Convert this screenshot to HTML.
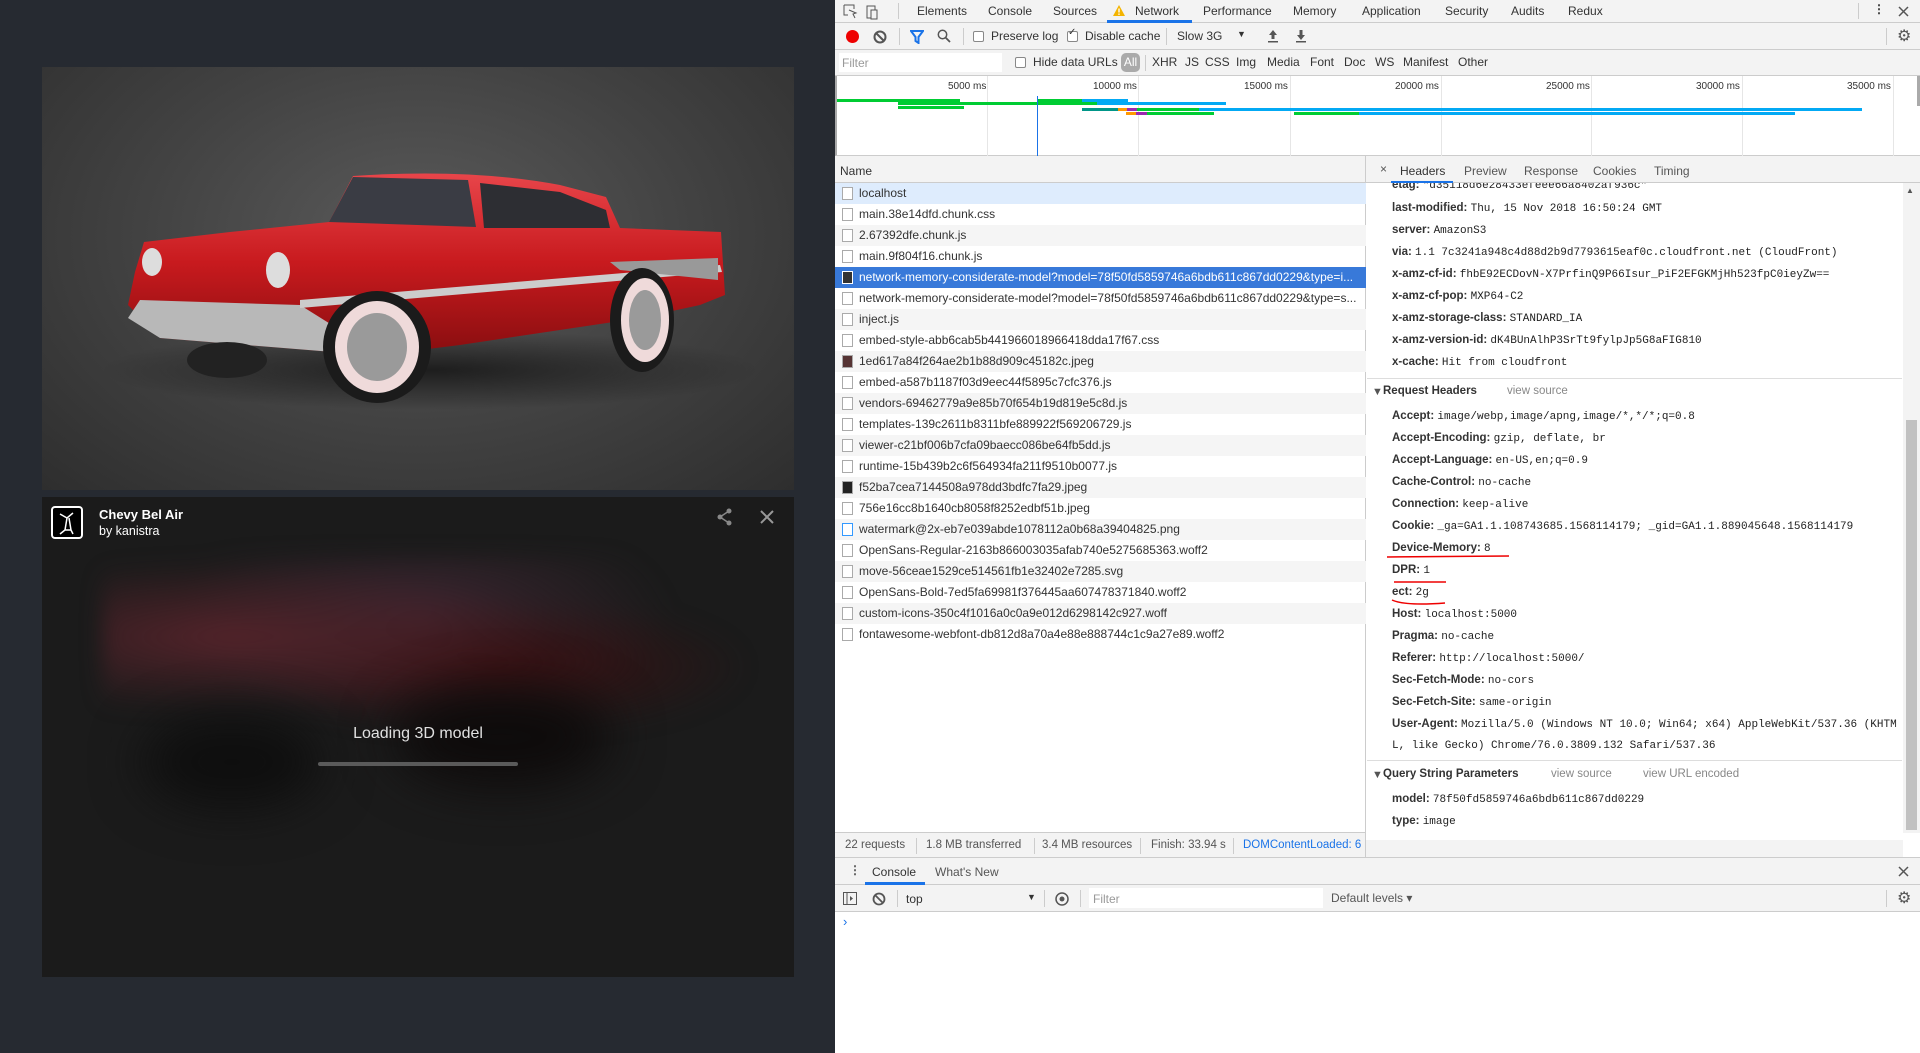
<!DOCTYPE html>
<html><head><meta charset="utf-8"><style>
*{margin:0;padding:0;box-sizing:border-box}
body{width:1920px;height:1053px;overflow:hidden;background:#262a31;font-family:"Liberation Sans",sans-serif;font-size:12px;color:#333;position:relative}
.a{position:absolute;white-space:nowrap}
#dt{position:absolute;left:835px;top:0;width:1085px;height:1053px;background:#fff}
.bar{position:absolute;left:0;width:1085px;background:#f3f3f3;border-bottom:1px solid #ccc}
.t{position:absolute;top:4px;color:#333;font-size:12px}
.sep{position:absolute;width:1px;background:#ccc}
.cb{position:absolute;width:11px;height:11px;border:1px solid #888;border-radius:2px;background:#fff}
.row{position:absolute;left:0;width:531px;height:21px;font-size:12px;line-height:21px}
.row .ic{position:absolute;left:7px;top:4px;width:11px;height:13px;border:1px solid #aaa;background:#fff}
.row span{position:absolute;left:24px}
.h{position:absolute;left:557px;font-size:11.5px;white-space:nowrap;color:#222}
.h b{font-weight:bold;color:#333}
.h i{font-style:normal;font-family:"Liberation Mono",monospace;font-size:11px;color:#222}
.lbl{position:absolute;top:81px;font-size:10px;color:#333}
.gl{position:absolute;top:76px;width:1px;height:80px;background:#e6e6e6}
.tb{position:absolute;height:3px}
</style></head><body>

<!-- car panel -->
<div class="a" style="left:42px;top:67px;width:752px;height:423px;background:radial-gradient(ellipse at 50% 40%,#5a5a5a 0%,#434343 50%,#2e2e2e 100%)"></div>
<svg class="a" style="left:0;top:0" width="835" height="500" viewBox="0 0 835 500">
<defs><radialGradient id="sh" cx="50%" cy="50%" r="50%"><stop offset="0" stop-color="#000" stop-opacity=".6"/><stop offset="1" stop-color="#000" stop-opacity="0"/></radialGradient>
<linearGradient id="rd" x1="0" y1="0" x2="0" y2="1"><stop offset="0" stop-color="#e8454a"/><stop offset=".5" stop-color="#c81a1e"/><stop offset="1" stop-color="#8a0e10"/></linearGradient></defs>
<ellipse cx="430" cy="370" rx="330" ry="40" fill="url(#sh)"/>
<path d="M353 176 Q470 168 560 185 L606 197 L620 228 L721 232 L725 295 L700 305 L640 318 L460 345 L420 350 L333 352 L160 338 L128 305 L135 272 L144 242 L230 232 L329 222 Z" fill="url(#rd)"/>
<path d="M329 222 L353 177 L468 180 L476 227 Z" fill="#3a3c44"/>
<path d="M480 183 L560 192 L606 210 L610 228 L484 228 Z" fill="#2d2e33"/>
<path d="M140 300 L300 305 L340 330 L333 352 L160 338 L128 318 Z" fill="#b8b8b8"/>
<path d="M300 300 L720 265 L722 272 L300 308Z" fill="#ccc"/>
<path d="M610 262 L718 258 L718 280 L620 270Z" fill="#999"/>
<ellipse cx="377" cy="347" rx="54" ry="56" fill="#1b1b1b"/>
<ellipse cx="377" cy="347" rx="42" ry="46" fill="#efdada"/>
<ellipse cx="377" cy="347" rx="30" ry="34" fill="#9a9a9a"/>
<ellipse cx="642" cy="320" rx="32" ry="52" fill="#1b1b1b"/>
<ellipse cx="645" cy="320" rx="24" ry="42" fill="#efdada"/>
<ellipse cx="645" cy="320" rx="16" ry="30" fill="#9a9a9a"/>
<ellipse cx="227" cy="360" rx="40" ry="18" fill="#222"/>
<ellipse cx="152" cy="262" rx="10" ry="14" fill="#ddd"/>
<ellipse cx="278" cy="270" rx="12" ry="18" fill="#ddd"/>
</svg>

<!-- viewer panel -->
<div class="a" style="left:42px;top:497px;width:752px;height:480px;background:#1b1b1b;overflow:hidden">
 <div class="a" style="left:60px;top:60px;width:640px;height:200px;background:radial-gradient(ellipse at 20% 40%,#53232a 0%,transparent 45%),radial-gradient(ellipse at 62% 55%,#3a1012 0%,transparent 45%),radial-gradient(ellipse at 50% 30%,#3a2530 0%,transparent 55%);filter:blur(10px)"></div>
 <div class="a" style="left:100px;top:220px;width:180px;height:90px;background:#0e0e0e;border-radius:50%;filter:blur(25px)"></div>
 <div class="a" style="left:350px;top:190px;width:220px;height:100px;background:#0e0b0b;border-radius:50%;filter:blur(25px)"></div>
</div>
<div class="a" style="left:51px;top:506px;width:32px;height:33px;border:2px solid #fff;border-radius:4px;background:#000"></div>
<svg class="a" style="left:51px;top:506px" width="32" height="33"><path d="M9 8 L16 12 L22 7 M16 12 L14 24 L20 24 L18 12 M9 28 L14 24 M22 28 L20 24" stroke="#fff" stroke-width="1.5" fill="none"/></svg>
<div class="a" style="left:99px;top:507px;color:#fff;font-weight:bold;font-size:13px">Chevy Bel Air</div>
<div class="a" style="left:99px;top:524px;color:#fff;font-size:12.5px">by kanistra</div>
<svg class="a" style="left:717px;top:508px" width="16" height="18"><circle cx="12" cy="3" r="2.5" fill="#888"/><circle cx="3" cy="9" r="2.5" fill="#888"/><circle cx="12" cy="15" r="2.5" fill="#888"/><path d="M12 3 L3 9 L12 15" stroke="#888" stroke-width="1.5" fill="none"/></svg>
<svg class="a" style="left:760px;top:510px" width="14" height="14"><path d="M1 1 L13 13 M13 1 L1 13" stroke="#999" stroke-width="2"/></svg>
<div class="a" style="left:318px;top:725px;width:200px;text-align:center;color:#e0e0e0;font-size:16px">Loading 3D model</div>
<div class="a" style="left:318px;top:762px;width:200px;height:4px;background:#5a5a5a;border-radius:2px"></div>

<!-- devtools -->
<div id="dt">
 <div class="bar" style="top:0;height:23px">
  <svg class="a" style="left:8px;top:4px" width="40" height="16"><path d="M1 1h10v4M1 1v10h4" stroke="#555" fill="none"/><path d="M6 6 L13 9 L10 10 L12 14" stroke="#555" fill="none"/><rect x="24" y="2" width="8" height="12" stroke="#555" fill="none"/><rect x="28" y="6" width="6" height="9" stroke="#555" fill="#f3f3f3"/></svg>
  <div class="sep" style="left:63px;top:3px;height:16px"></div>
  <div class="t" style="left:82px">Elements</div><div class="t" style="left:153px">Console</div><div class="t" style="left:218px">Sources</div>
  <svg class="a" style="left:278px;top:5px" width="12" height="11"><path d="M6 0 L12 11 L0 11Z" fill="#f4b400"/><rect x="5.3" y="3.5" width="1.4" height="4" fill="#fff"/><rect x="5.3" y="8.5" width="1.4" height="1.4" fill="#fff"/></svg>
  <div class="t" style="left:300px">Network</div>
  <div class="a" style="left:272px;top:20px;width:85px;height:3px;background:#1a73e8"></div>
  <div class="t" style="left:368px">Performance</div><div class="t" style="left:458px">Memory</div><div class="t" style="left:527px">Application</div><div class="t" style="left:610px">Security</div><div class="t" style="left:676px">Audits</div><div class="t" style="left:733px">Redux</div>
  <div class="sep" style="left:1023px;top:3px;height:16px"></div>
  <div class="t" style="left:1038px;top:2px;font-weight:bold">⋮</div>
  <svg class="a" style="left:1063px;top:6px" width="11" height="11"><path d="M1 1L10 10M10 1L1 10" stroke="#555" stroke-width="1.5"/></svg>
 </div>
 <div class="bar" style="top:23px;height:27px">
  <div class="a" style="left:11px;top:7px;width:13px;height:13px;border-radius:50%;background:#e00"></div>
  <svg class="a" style="left:38px;top:7px" width="14" height="14"><circle cx="7" cy="7" r="5.5" stroke="#555" stroke-width="2" fill="none"/><path d="M3 3L11 11" stroke="#555" stroke-width="2"/></svg>
  <div class="sep" style="left:64px;top:5px;height:17px"></div>
  <svg class="a" style="left:75px;top:7px" width="14" height="14"><path d="M1 1H13L8.5 7V13L5.5 11V7Z" fill="none" stroke="#1a73e8" stroke-width="2"/></svg>
  <svg class="a" style="left:102px;top:6px" width="14" height="14"><circle cx="5.5" cy="5.5" r="4.2" stroke="#555" stroke-width="1.5" fill="none"/><path d="M8.5 8.5L13 13" stroke="#555" stroke-width="1.8"/></svg>
  <div class="sep" style="left:128px;top:5px;height:17px"></div>
  <div class="cb" style="left:138px;top:8px"></div><div class="t" style="left:156px;top:6px">Preserve log</div>
  <div class="cb" style="left:232px;top:8px"></div><div class="t" style="left:233px;top:4px;font-size:10px">✓</div><div class="t" style="left:250px;top:6px">Disable cache</div>
  <div class="sep" style="left:331px;top:5px;height:17px"></div>
  <div class="t" style="left:342px;top:6px">Slow 3G</div><div class="t" style="left:402px;top:6px;font-size:9px">▼</div>
  <svg class="a" style="left:432px;top:6px" width="40" height="15"><path d="M6 1L10 6H7.5V10H4.5V6H2Z" fill="#555"/><rect x="1" y="12" width="10" height="1.5" fill="#555"/><path d="M34 11L38 6H35.5V1H32.5V6H30Z" fill="#555"/><rect x="29" y="12" width="10" height="1.5" fill="#555"/></svg>
  <div class="sep" style="left:1051px;top:5px;height:17px"></div>
  <div class="t" style="left:1062px;top:3px;font-size:16px;color:#555">⚙</div>
 </div>
 <div class="bar" style="top:50px;height:26px">
  <div class="a" style="left:4px;top:3px;width:163px;height:19px;background:#fff"></div>
  <div class="t" style="left:7px;top:6px;color:#999">Filter</div>
  <div class="cb" style="left:180px;top:7px"></div><div class="t" style="left:198px;top:5px">Hide data URLs</div>
  <div class="a" style="left:286px;top:3px;width:19px;height:19px;background:#aaa;border-radius:5px;color:#fff;font-size:12px;text-align:center;line-height:19px">All</div>
  <div class="sep" style="left:310px;top:5px;height:16px"></div>
  <div class="t" style="left:317px;top:5px">XHR</div><div class="t" style="left:350px;top:5px">JS</div><div class="t" style="left:370px;top:5px">CSS</div><div class="t" style="left:401px;top:5px">Img</div><div class="t" style="left:432px;top:5px">Media</div><div class="t" style="left:475px;top:5px">Font</div><div class="t" style="left:509px;top:5px">Doc</div><div class="t" style="left:540px;top:5px">WS</div><div class="t" style="left:568px;top:5px">Manifest</div><div class="t" style="left:623px;top:5px">Other</div>
 </div>
 <!-- overview -->
 <div class="a" style="left:0;top:76px;width:1085px;height:80px;background:#fff;border-bottom:1px solid #ccc;border-left:2px solid #aaa"></div>
 <div class="gl" style="left:152px"></div><div class="gl" style="left:303px"></div><div class="gl" style="left:455px"></div><div class="gl" style="left:606px"></div><div class="gl" style="left:756px"></div><div class="gl" style="left:907px"></div><div class="gl" style="left:1058px"></div>
 <div class="lbl" style="left:113px">5000 ms</div><div class="lbl" style="left:258px">10000 ms</div><div class="lbl" style="left:409px">15000 ms</div><div class="lbl" style="left:560px">20000 ms</div><div class="lbl" style="left:711px">25000 ms</div><div class="lbl" style="left:861px">30000 ms</div><div class="lbl" style="left:1012px">35000 ms</div>
 <div class="a" style="left:1082px;top:76px;width:3px;height:30px;background:#aaa"></div>
 <div class="tb" style="left:2px;top:99px;width:123px;background:#0c3"></div>
 <div class="tb" style="left:63px;top:102px;width:199px;background:#0c3"></div><div class="tb" style="left:262px;top:102px;width:129px;background:#03a9f4"></div>
 <div class="tb" style="left:63px;top:106px;width:66px;background:#0c3"></div>
 <div class="tb" style="left:203px;top:99px;width:44px;background:#0c3"></div><div class="tb" style="left:247px;top:99px;width:46px;background:#03a9f4"></div>
 <div class="tb" style="left:247px;top:108px;width:36px;background:#009688"></div><div class="tb" style="left:283px;top:108px;width:9px;background:#f90"></div><div class="tb" style="left:292px;top:108px;width:10px;background:#9c27b0"></div><div class="tb" style="left:302px;top:108px;width:62px;background:#0c3"></div><div class="tb" style="left:364px;top:108px;width:663px;background:#03a9f4"></div>
 <div class="tb" style="left:291px;top:112px;width:10px;background:#f90"></div><div class="tb" style="left:301px;top:112px;width:11px;background:#9c27b0"></div><div class="tb" style="left:312px;top:112px;width:67px;background:#0c3"></div><div class="tb" style="left:459px;top:112px;width:65px;background:#0c3"></div><div class="tb" style="left:524px;top:112px;width:436px;background:#03a9f4"></div>
 <div class="a" style="left:202px;top:96px;width:1px;height:60px;background:#1a73e8"></div>

 <!-- name header -->
 <div class="a" style="left:0;top:156px;width:531px;height:27px;background:#f3f3f3;border-bottom:1px solid #ccc;border-right:1px solid #ccc"></div>
 <div class="t" style="left:5px;top:164px">Name</div>
 <div class="a" style="left:531px;top:156px;width:554px;height:27px;background:#f3f3f3;border-bottom:1px solid #ccc"></div>
 <div class="t" style="left:545px;top:162px;color:#555">×</div>
 <div class="t" style="left:565px;top:164px">Headers</div><div class="t" style="left:629px;top:164px;color:#555">Preview</div><div class="t" style="left:689px;top:164px;color:#555">Response</div><div class="t" style="left:758px;top:164px;color:#555">Cookies</div><div class="t" style="left:819px;top:164px;color:#555">Timing</div>
 <div class="a" style="left:556px;top:181px;width:62px;height:2px;background:#1a73e8"></div>

 <div style="position:absolute;left:0;top:183px;width:531px;height:650px;border-right:1px solid #ccc">
  <div class="row" style="top:0;background:#deecfd"><div class="ic"></div><span>localhost</span></div>
  <div class="row" style="top:21px"><div class="ic"></div><span>main.38e14dfd.chunk.css</span></div>
  <div class="row" style="top:42px;background:#f5f5f5"><div class="ic"></div><span>2.67392dfe.chunk.js</span></div>
  <div class="row" style="top:63px"><div class="ic"></div><span>main.9f804f16.chunk.js</span></div>
  <div class="row" style="top:84px;background:#3879d9;color:#fff"><div class="ic" style="background:#333;border-color:#fff"></div><span>network-memory-considerate-model?model=78f50fd5859746a6bdb611c867dd0229&amp;type=i...</span></div>
  <div class="row" style="top:105px"><div class="ic"></div><span>network-memory-considerate-model?model=78f50fd5859746a6bdb611c867dd0229&amp;type=s...</span></div>
  <div class="row" style="top:126px;background:#f5f5f5"><div class="ic"></div><span>inject.js</span></div>
  <div class="row" style="top:147px"><div class="ic"></div><span>embed-style-abb6cab5b441966018966418dda17f67.css</span></div>
  <div class="row" style="top:168px;background:#f5f5f5"><div class="ic" style="background:#533"></div><span>1ed617a84f264ae2b1b88d909c45182c.jpeg</span></div>
  <div class="row" style="top:189px"><div class="ic"></div><span>embed-a587b1187f03d9eec44f5895c7cfc376.js</span></div>
  <div class="row" style="top:210px;background:#f5f5f5"><div class="ic"></div><span>vendors-69462779a9e85b70f654b19d819e5c8d.js</span></div>
  <div class="row" style="top:231px"><div class="ic"></div><span>templates-139c2611b8311bfe889922f569206729.js</span></div>
  <div class="row" style="top:252px;background:#f5f5f5"><div class="ic"></div><span>viewer-c21bf006b7cfa09baecc086be64fb5dd.js</span></div>
  <div class="row" style="top:273px"><div class="ic"></div><span>runtime-15b439b2c6f564934fa211f9510b0077.js</span></div>
  <div class="row" style="top:294px;background:#f5f5f5"><div class="ic" style="background:#222"></div><span>f52ba7cea7144508a978dd3bdfc7fa29.jpeg</span></div>
  <div class="row" style="top:315px"><div class="ic"></div><span>756e16cc8b1640cb8058f8252edbf51b.jpeg</span></div>
  <div class="row" style="top:336px;background:#f5f5f5"><div class="ic" style="border-color:#39f"></div><span>watermark@2x-eb7e039abde1078112a0b68a39404825.png</span></div>
  <div class="row" style="top:357px"><div class="ic"></div><span>OpenSans-Regular-2163b866003035afab740e5275685363.woff2</span></div>
  <div class="row" style="top:378px;background:#f5f5f5"><div class="ic"></div><span>move-56ceae1529ce514561fb1e32402e7285.svg</span></div>
  <div class="row" style="top:399px"><div class="ic"></div><span>OpenSans-Bold-7ed5fa69981f376445aa607478371840.woff2</span></div>
  <div class="row" style="top:420px;background:#f5f5f5"><div class="ic"></div><span>custom-icons-350c4f1016a0c0a9e012d6298142c927.woff</span></div>
  <div class="row" style="top:441px"><div class="ic"></div><span>fontawesome-webfont-db812d8a70a4e88e888744c1c9a27e89.woff2</span></div>
 </div>

 <!-- headers pane -->
 <div style="position:absolute;left:0;top:183px;width:1085px;height:650px;overflow:hidden">
 <div class="h" style="top:-4px"><b>etag:</b> <i>"d35118d6e28433efeee66a8402af936c"</i></div>
 <div class="h" style="top:19px"><b>last-modified:</b> <i>Thu, 15 Nov 2018 16:50:24 GMT</i></div>
 <div class="h" style="top:41px"><b>server:</b> <i>AmazonS3</i></div>
 <div class="h" style="top:63px"><b>via:</b> <i>1.1 7c3241a948c4d88d2b9d7793615eaf0c.cloudfront.net (CloudFront)</i></div>
 <div class="h" style="top:85px"><b>x-amz-cf-id:</b> <i>fhbE92ECDovN-X7PrfinQ9P66Isur_PiF2EFGKMjHh523fpC0ieyZw==</i></div>
 <div class="h" style="top:107px"><b>x-amz-cf-pop:</b> <i>MXP64-C2</i></div>
 <div class="h" style="top:129px"><b>x-amz-storage-class:</b> <i>STANDARD_IA</i></div>
 <div class="h" style="top:151px"><b>x-amz-version-id:</b> <i>dK4BUnAlhP3SrTt9fylpJp5G8aFIG810</i></div>
 <div class="h" style="top:173px"><b>x-cache:</b> <i>Hit from cloudfront</i></div>
 <div class="a" style="left:532px;top:195px;width:535px;height:1px;background:#ddd"></div>
 <div class="h" style="left:537px;top:203px;font-size:11px;color:#555">▼</div>
 <div class="h" style="left:548px;top:202px"><b>Request Headers</b></div>
 <div class="h" style="left:672px;top:202px;color:#888">view source</div>
 <div class="h" style="top:227px"><b>Accept:</b> <i>image/webp,image/apng,image/*,*/*;q=0.8</i></div>
 <div class="h" style="top:249px"><b>Accept-Encoding:</b> <i>gzip, deflate, br</i></div>
 <div class="h" style="top:271px"><b>Accept-Language:</b> <i>en-US,en;q=0.9</i></div>
 <div class="h" style="top:293px"><b>Cache-Control:</b> <i>no-cache</i></div>
 <div class="h" style="top:315px"><b>Connection:</b> <i>keep-alive</i></div>
 <div class="h" style="top:337px"><b>Cookie:</b> <i>_ga=GA1.1.108743685.1568114179; _gid=GA1.1.889045648.1568114179</i></div>
 <div class="h" style="top:359px"><b>Device-Memory:</b> <i>8</i></div>
 <div class="h" style="top:381px"><b>DPR:</b> <i>1</i></div>
 <div class="h" style="top:403px"><b>ect:</b> <i>2g</i></div>
 <div class="h" style="top:425px"><b>Host:</b> <i>localhost:5000</i></div>
 <div class="h" style="top:447px"><b>Pragma:</b> <i>no-cache</i></div>
 <div class="h" style="top:469px"><b>Referer:</b> <i>http://localhost:5000/</i></div>
 <div class="h" style="top:491px"><b>Sec-Fetch-Mode:</b> <i>no-cors</i></div>
 <div class="h" style="top:513px"><b>Sec-Fetch-Site:</b> <i>same-origin</i></div>
 <div class="h" style="top:535px"><b>User-Agent:</b> <i>Mozilla/5.0 (Windows NT 10.0; Win64; x64) AppleWebKit/537.36 (KHTM</i></div>
 <div class="h" style="top:556px"><i>L, like Gecko) Chrome/76.0.3809.132 Safari/537.36</i></div>
 <div class="a" style="left:532px;top:577px;width:535px;height:1px;background:#ddd"></div>
 <div class="h" style="left:537px;top:586px;font-size:11px;color:#555">▼</div>
 <div class="h" style="left:548px;top:585px"><b>Query String Parameters</b></div>
 <div class="h" style="left:716px;top:585px;color:#888">view source</div><div class="h" style="left:808px;top:585px;color:#888">view URL encoded</div>
 <div class="h" style="top:610px"><b>model:</b> <i>78f50fd5859746a6bdb611c867dd0229</i></div>
 <div class="h" style="top:632px"><b>type:</b> <i>image</i></div>
 </div>
 <svg class="a" style="left:0;top:0" width="1085" height="700">
  <path d="M552 557 L674 556" stroke="#e00" stroke-width="1.5" fill="none"/>
  <path d="M559 582 L611 582" stroke="#e00" stroke-width="1.5" fill="none"/>
  <path d="M557 600 Q570 606 610 603" stroke="#e00" stroke-width="1.5" fill="none"/>
 </svg>
 <!-- right scrollbar -->
 <div class="a" style="left:1068px;top:183px;width:17px;height:650px;background:#f3f3f3"></div>
 <div class="a" style="left:1071px;top:420px;width:11px;height:410px;background:#c1c1c1"></div>
 <div class="t" style="left:1071px;top:186px;font-size:8px;color:#555">▲</div>
 <div class="a" style="left:531px;top:840px;width:537px;height:18px;background:#f3f3f3"></div>

 <!-- status bar -->
 <div class="a" style="left:0;top:832px;width:531px;height:26px;background:#f3f3f3;border-top:1px solid #ccc;border-right:1px solid #ccc;font-size:11.5px;line-height:25px;color:#555;overflow:hidden">
  <span class="a" style="left:10px">22 requests</span><span class="sep" style="left:81px;top:5px;height:16px"></span>
  <span class="a" style="left:91px">1.8 MB transferred</span><span class="sep" style="left:199px;top:5px;height:16px"></span>
  <span class="a" style="left:207px">3.4 MB resources</span><span class="sep" style="left:305px;top:5px;height:16px"></span>
  <span class="a" style="left:316px">Finish: 33.94 s</span><span class="sep" style="left:398px;top:5px;height:16px"></span>
  <span class="a" style="left:408px;color:#1a73e8">DOMContentLoaded: 6</span>
 </div>
 <div class="a" style="left:0;top:857px;width:1085px;height:1px;background:#ccc"></div>
 <!-- console drawer -->
 <div class="bar" style="top:858px;height:27px">
  <div class="t" style="left:14px;top:5px;font-weight:bold;color:#555">⋮</div>
  <div class="t" style="left:37px;top:7px">Console</div><div class="t" style="left:100px;top:7px;color:#555">What's New</div>
  <div class="a" style="left:30px;top:24px;width:60px;height:3px;background:#1a73e8"></div>
  <svg class="a" style="left:1063px;top:8px" width="11" height="11"><path d="M1 1L10 10M10 1L1 10" stroke="#555" stroke-width="1.5"/></svg>
 </div>
 <div class="bar" style="top:885px;height:27px">
  <svg class="a" style="left:8px;top:7px" width="14" height="13"><rect x=".5" y=".5" width="13" height="12" fill="none" stroke="#555"/><path d="M4 1V12" stroke="#555"/><path d="M7 4L10 6.5L7 9Z" fill="#555"/></svg>
  <svg class="a" style="left:37px;top:7px" width="14" height="14"><circle cx="7" cy="7" r="5.5" stroke="#555" stroke-width="1.8" fill="none"/><path d="M3 3L11 11" stroke="#555" stroke-width="1.8"/></svg>
  <div class="sep" style="left:62px;top:5px;height:17px"></div>
  <div class="t" style="left:71px;top:7px">top</div><div class="t" style="left:192px;top:7px;font-size:9px">▼</div>
  <div class="sep" style="left:209px;top:5px;height:17px"></div>
  <svg class="a" style="left:220px;top:7px" width="14" height="14"><circle cx="7" cy="7" r="6" stroke="#555" stroke-width="1.5" fill="none"/><circle cx="7" cy="7" r="2.5" fill="#555"/></svg>
  <div class="sep" style="left:245px;top:5px;height:17px"></div>
  <div class="a" style="left:254px;top:3px;width:234px;height:20px;background:#fff"></div>
  <div class="t" style="left:258px;top:7px;color:#999">Filter</div>
  <div class="t" style="left:496px;top:6px;color:#555">Default levels ▾</div>
  <div class="sep" style="left:1051px;top:5px;height:17px"></div>
  <div class="t" style="left:1062px;top:3px;font-size:16px;color:#555">⚙</div>
 </div>
 <div class="t" style="left:8px;top:914px;color:#1a73e8;font-size:13px">›</div>
</div>
</body></html>
